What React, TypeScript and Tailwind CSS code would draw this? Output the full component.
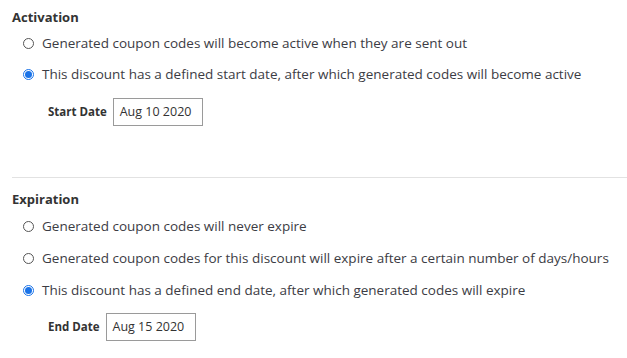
import React from "react";

function Radio({ checked, label, h }: { checked?: boolean; label: string; h: "a" | "b" }) {
  return (
    <label className={h === "a" ? "flex items-center h-[31px] pl-[11px]" : "flex items-center h-[32px] pl-[11px]"}>
      <span
        className={
          checked
            ? "w-[11px] h-[11px] rounded-full border border-[#1a73e8] bg-white flex items-center justify-center"
            : "w-[11px] h-[11px] rounded-full border border-[#555] bg-white"
        }
      >
        {checked && <span className="w-[7px] h-[7px] rounded-full bg-[#1a73e8]" />}
      </span>
      <span className="ml-[8px] text-[13.5px] text-[#3c3c44]">{label}</span>
    </label>
  );
}

function DateRow({ label, value, tall }: { label: string; value: string; tall?: boolean }) {
  return (
    <div className={tall ? "flex items-center pl-[36px] h-[44px]" : "flex items-center pl-[36px] h-[42px]"}>
      <span className="text-[11.5px] font-bold text-[#333]">{label}</span>
      <div className="ml-[6px] w-[90px] h-[28px] border border-[#9a9a9a] flex items-center px-[6px] text-[12.5px] text-[#333]">
        {value}
      </div>
    </div>
  );
}

export default function App() {
  return (
    <div
      className="bg-white w-[627px] h-[358px] overflow-hidden pl-[12px]"
      style={{ fontFamily: '"Open Sans", "Liberation Sans", sans-serif' }}
    >
      <div className="pt-[8px] h-[28px] text-[13px] font-bold text-[#333] leading-[18px]">Activation</div>
      <Radio h="a" label="Generated coupon codes will become active when they are sent out" />
      <Radio h="a" checked label="This discount has a defined start date, after which generated codes will become active" />
      <DateRow tall label="Start Date" value="Aug 10 2020" />
      <div className="h-[43px]" />
      <div className="border-t border-[#e2e2e2]" />
      <div className="pt-[12px] h-[32px] text-[13px] font-bold text-[#333] leading-[18px]">Expiration</div>
      <Radio h="b" label="Generated coupon codes will never expire" />
      <Radio h="b" label="Generated coupon codes for this discount will expire after a certain number of days/hours" />
      <Radio h="b" checked label="This discount has a defined end date, after which generated codes will expire" />
      <DateRow label="End Date" value="Aug 15 2020" />
    </div>
  );
}
